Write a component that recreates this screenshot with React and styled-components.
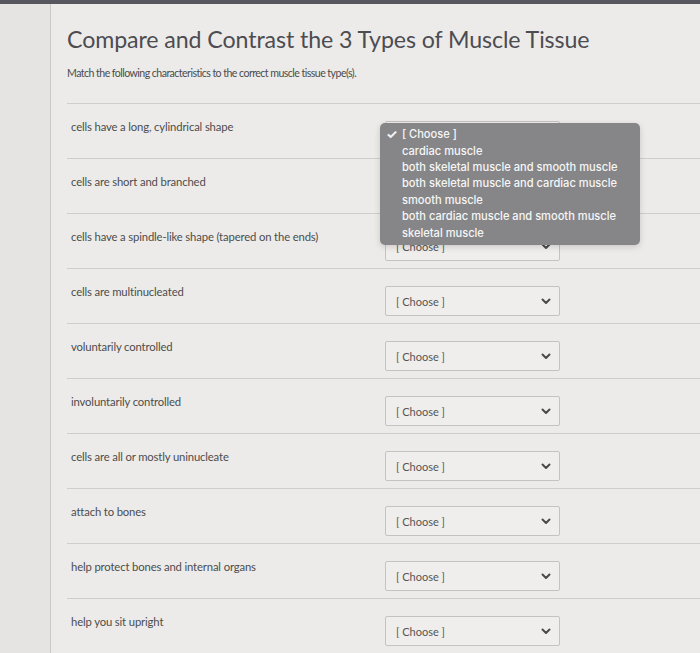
import React from "react";
import styled, { createGlobalStyle } from "styled-components";

const Global = createGlobalStyle`
  html, body { margin: 0; padding: 0; background: #ebeae8; }
  body { font-family: Lato, "Open Sans", sans-serif; }
  * { box-sizing: border-box; }
`;

const TopBar = styled.div`
  height: 4px;
  background: #575760;
`;

const Page = styled.div`
  display: flex;
  height: 649px;
  overflow: hidden;
`;

const Sidebar = styled.div`
  width: 51px;
  flex: none;
  background: #e5e4e2;
  border-right: 1px solid #c9c8c6;
`;

const Main = styled.main`
  flex: 1;
  padding-left: 16px;
  background: #ecebe9;
`;

const Title = styled.h1`
  margin: 0;
  padding-top: 21px;
  font-family: Lato, sans-serif;
  font-weight: 400;
  font-size: 23.2px;
  line-height: 28px;
  color: #4c4c51;
  letter-spacing: -0.1px;
`;

const Subtitle = styled.p`
  margin: 0;
  padding-top: 13px;
  font-family: Lato, sans-serif;
  font-size: 10.6px;
  line-height: 14px;
  color: #4b4b4b;
  letter-spacing: -0.55px;
  height: 50px;
`;

const List = styled.div`
  border-top: 1px solid #cfcecc;
`;

const Row = styled.div`
  position: relative;
  display: grid;
  grid-template-columns: 318px 175px;
  align-items: start;
  height: 55px;
  padding-top: 15px;
  border-bottom: 1px solid #cfcecc;
`;

const Label = styled.div`
  padding-left: 4px;
  font-family: Lato, sans-serif;
  font-size: 11.3px;
  line-height: 16px;
  color: #4d4d4d;
  letter-spacing: -0.15px;
`;

const SelectBox = styled.div`
  position: relative;
  margin-top: 2px;
  height: 30px;
  display: flex;
  align-items: center;
  justify-content: space-between;
  padding: 0 8px 0 10px;
  background: #efeeec;
  border: 1px solid #c4c3c1;
  border-radius: 2px;
  font-family: Lato, sans-serif;
  font-size: 11px;
  color: #555;
`;

const Chevron = () => (
  <svg width="10" height="7" viewBox="0 0 10 7">
    <path d="M1.5 1.5 L5 5 L8.5 1.5" fill="none" stroke="#4a4a4a" strokeWidth="2" strokeLinecap="round" strokeLinejoin="round" />
  </svg>
);

const Menu = styled.ul`
  position: absolute;
  left: -6px;
  top: 1px;
  z-index: 10;
  width: 260px;
  margin: 0;
  padding: 3px 0 4px;
  list-style: none;
  background: #868689;
  border-radius: 5px;
  box-shadow: 0 2px 6px rgba(0,0,0,0.15);
`;

const MenuItem = styled.li`
  display: flex;
  align-items: center;
  height: 16.4px;
  padding-left: 6px;
  font-family: Inter, "Open Sans", sans-serif;
  font-weight: 500;
  font-size: 11.1px;
  color: #f6f6f6;
  white-space: nowrap;
`;

const Check = styled.span`
  width: 16px;
  flex: none;
  font-size: 13px;
  font-weight: 700;
  line-height: 1;
`;

const items = [
  "cells have a long, cylindrical shape",
  "cells are short and branched",
  "cells have a spindle-like shape (tapered on the ends)",
  "cells are multinucleated",
  "voluntarily controlled",
  "involuntarily controlled",
  "cells are all or mostly uninucleate",
  "attach to bones",
  "help protect bones and internal organs",
  "help you sit upright",
];

const options = [
  "[ Choose ]",
  "cardiac muscle",
  "both skeletal muscle and smooth muscle",
  "both skeletal muscle and cardiac muscle",
  "smooth muscle",
  "both cardiac muscle and smooth muscle",
  "skeletal muscle",
];

export default function App() {
  return (
    <>
      <Global />
      <TopBar />
      <Page>
        <Sidebar />
        <Main>
          <Title>Compare and Contrast the 3 Types of Muscle Tissue</Title>
          <Subtitle>Match the following characteristics to the correct muscle tissue type(s).</Subtitle>
          <List>
            {items.map((text, i) => (
              <Row key={text}>
                <Label>{text}</Label>
                <SelectBox>
                  <span>[ Choose ]</span>
                  <Chevron />
                  {i === 0 && (
                    <Menu>
                      {options.map((o, j) => (
                        <MenuItem key={o}>
                          <Check>{j === 0 ? "✓" : ""}</Check>
                          {o}
                        </MenuItem>
                      ))}
                    </Menu>
                  )}
                </SelectBox>
              </Row>
            ))}
          </List>
        </Main>
      </Page>
    </>
  );
}
